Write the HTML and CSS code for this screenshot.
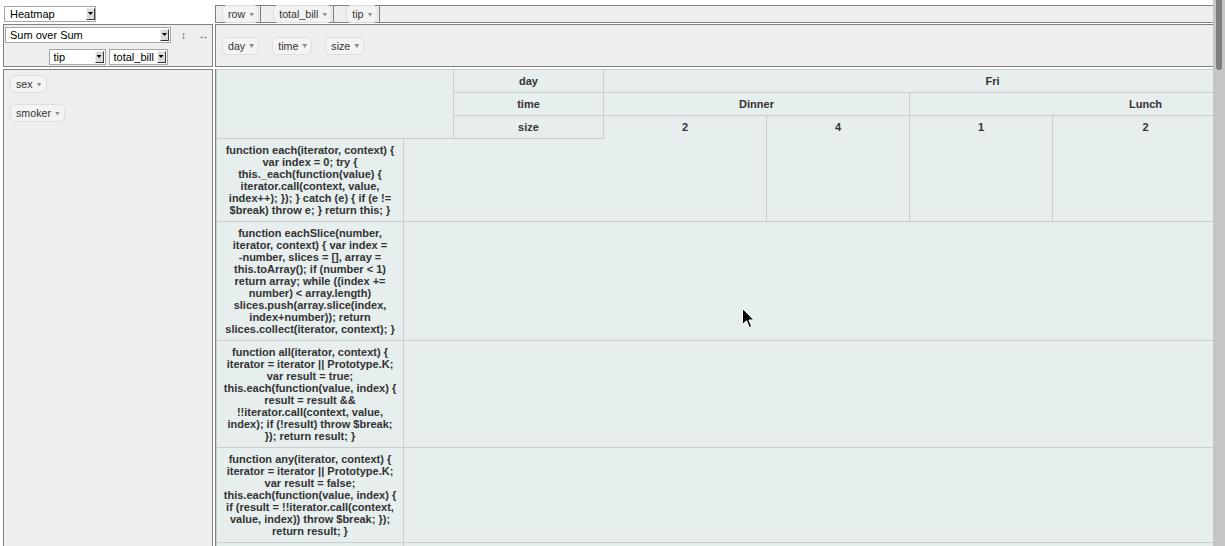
FILE: index.html
```html
<!DOCTYPE html>
<html>
<head>
<meta charset="utf-8">
<link rel="stylesheet" href="styles.css">
</head>
<body>
<div class="ui">
  <div class="renderer-cell">
    <div class="sel sel-renderer">Heatmap<i class="arr"></i></div>
  </div>
  <div class="axis unused">
    <div class="li"><span class="pill">row<i class="tri"></i></span><span class="sep"></span></div>
    <div class="li"><span class="pill">total_bill<i class="tri"></i></span><span class="sep"></span></div>
    <div class="li"><span class="pill">tip<i class="tri"></i></span><span class="sep"></span></div>
  </div>

  <div class="axis aggregator">
    <div class="agg-row">
      <div class="sel sel-agg">Sum over Sum<i class="arr"></i></div>
      <span class="order">↕</span><span class="order">↔</span>
    </div>
    <div class="agg-args">
      <div class="sel sel-tip">tip<i class="arr"></i></div>
      <div class="sel sel-tb">total_bill<i class="arr"></i></div>
    </div>
  </div>
  <div class="axis cols">
    <div class="li"><span class="pill">day<i class="tri"></i></span></div>
    <div class="li"><span class="pill">time<i class="tri"></i></span></div>
    <div class="li"><span class="pill">size<i class="tri"></i></span></div>
  </div>

  <div class="axis rows">
    <div class="vli"><span class="pill">sex<i class="tri"></i></span></div>
    <div class="vli"><span class="pill">smoker<i class="tri"></i></span></div>
  </div>
  <div class="render-area">
    <table class="pvt">
      <colgroup>
        <col class="c-a"><col class="c-b"><col class="c-c"><col class="c-d"><col class="c-e"><col class="c-f"><col class="c-g"><col class="c-h">
      </colgroup>
      <thead>
        <tr class="h1">
          <th colspan="2" rowspan="3"></th>
          <th class="axl">day</th>
          <th colspan="5">Fri</th>
        </tr>
        <tr>
          <th class="axl">time</th>
          <th colspan="2">Dinner</th>
          <th colspan="3">Lunch</th>
        </tr>
        <tr>
          <th class="axl">size</th>
          <th class="open">2</th>
          <th class="open">4</th>
          <th class="open">1</th>
          <th class="open">2</th>
          <th class="open">3</th>
        </tr>
      </thead>
      <tbody>
        <tr class="first-body">
          <th class="rl">function each(iterator, context) {<br>var index = 0; try {<br>this._each(function(value) {<br>iterator.call(context, value,<br>index++); }); } catch (e) { if (e !=<br>$break) throw e; } return this; }</th>
          <td colspan="3"></td>
          <td></td>
          <td></td>
          <td></td>
          <td></td>
        </tr>
        <tr>
          <th class="rl">function eachSlice(number,<br>iterator, context) { var index =<br>-number, slices = [], array =<br>this.toArray(); if (number &lt; 1)<br>return array; while ((index +=<br>number) &lt; array.length)<br>slices.push(array.slice(index,<br>index+number)); return<br>slices.collect(iterator, context); }</th>
          <td colspan="7"></td>
        </tr>
        <tr>
          <th class="rl">function all(iterator, context) {<br>iterator = iterator || Prototype.K;<br>var result = true;<br>this.each(function(value, index) {<br>result = result &amp;&amp;<br>!!iterator.call(context, value,<br>index); if (!result) throw $break;<br>}); return result; }</th>
          <td colspan="7"></td>
        </tr>
        <tr>
          <th class="rl">function any(iterator, context) {<br>iterator = iterator || Prototype.K;<br>var result = false;<br>this.each(function(value, index) {<br>if (result = !!iterator.call(context,<br>value, index)) throw $break; });<br>return result; }</th>
          <td colspan="7"></td>
        </tr>
        <tr>
          <th class="rl">function collect(iterator, context) {<br>iterator = iterator || Prototype.K;<br>var results = [];<br>this.each(function(value, index) {<br>results.push(iterator.call(context,<br>value, index)); }); return results; }</th>
          <td colspan="7"></td>
        </tr>
      </tbody>
    </table>
  </div>
</div>

<div class="scrollbar"><div class="thumb"></div></div>

<svg class="cursor" width="13" height="21" viewBox="0 0 13 21">
  <path d="M0.5 0.5 L0.5 16.5 L4.5 12.8 L7.3 19.5 L9.6 18.5 L6.9 12 L11.8 12 Z" fill="#000" stroke="#fff" stroke-width="1"/>
</svg>
</body>
</html>
```

FILE: styles.css
```css
* { box-sizing: border-box; }

html, body {
  margin: 0;
  padding: 0;
  height: 100%;
  overflow: hidden;
  background: #fff;
}

body {
  font-family: "Liberation Sans", Arial, sans-serif;
  color: #333;
}

.ui {
  display: grid;
  grid-template-columns: 210px 1500px;
  grid-template-rows: 18px 43px auto;
  column-gap: 2px;
  row-gap: 1px;
  padding: 5px 0 0 3px;
  width: max-content;
}

/* ---------- selects ---------- */
.renderer-cell {
  padding: 1px 0 0 1px;
}

.sel {
  position: relative;
  height: 16px;
  border: 1px solid #a6a6a6;
  background: #fff;
  color: #000;
  font-size: 11px;
  line-height: 14px;
  padding-left: 4px;
  white-space: nowrap;
}

.sel .arr {
  position: absolute;
  right: 1px;
  top: 1px;
  width: 9px;
  height: 12px;
  background: #dadada;
  border: 1px solid;
  border-color: #f2f2f2 #3a3a3a #3a3a3a #f2f2f2;
}

.sel .arr::after {
  content: "";
  position: absolute;
  left: 1px;
  top: 3px;
  width: 5px;
  height: 3px;
  background: #000;
  clip-path: polygon(0 0, 100% 0, 50% 100%);
}

.sel-renderer { width: 92px; padding-left: 5px; }
.sel-renderer .arr { right: 0; }
.sel-agg { width: 166px; }
.sel-tip { width: 57px; }
.sel-tb { width: 59px; }

/* ---------- axis containers ---------- */
.axis {
  border: 1px solid #808080;
  background: #eee;
}

.pill {
  display: inline-flex;
  align-items: center;
  height: 18px;
  padding: 0 4px 0 5px;
  border: 1px solid #dedede;
  border-radius: 5px;
  background: #f3f3f3;
  font-size: 10.67px;
  line-height: 12px;
  color: #333;
  white-space: nowrap;
}

.tri {
  display: inline-block;
  width: 5px;
  height: 4px;
  margin-left: 4px;
  margin-top: 1px;
  background: #8c8c8c;
  clip-path: polygon(0 0, 100% 0, 50% 100%);
}

.unused {
  display: flex;
  align-items: center;
  gap: 1px;
}

.unused .li {
  display: flex;
  align-items: center;
  align-self: stretch;
  gap: 1px;
  padding: 0 5px 0 6px;
}

.unused .sep {
  align-self: stretch;
  width: 1px;
  margin: -1px 0;
  background: #808080;
}

.aggregator {
  padding: 2px 0 0 1px;
}

.agg-row {
  display: flex;
  align-items: center;
}

.order {
  display: inline-block;
  width: 15px;
  margin-left: 5px;
  text-align: center;
  font-size: 10px;
  color: #555;
}

.agg-args {
  display: flex;
  justify-content: center;
  gap: 3px;
  margin-top: 6px;
  padding-right: 1px;
}

.cols {
  display: flex;
  align-items: center;
  gap: 1px;
}

.cols .li {
  display: flex;
  padding: 0 6px;
}

.rows {
  margin-top: 1px;
}

.vli {
  display: flex;
  padding: 5px 6px 6px;
}

/* ---------- renderer / table ---------- */
.render-area {
  margin-top: 1px;
  border-left: 1px solid #808080;
}

.pvt {
  border-collapse: collapse;
  table-layout: fixed;
  width: 1165px;
  font-size: 11px;
  line-height: 12px;
  font-weight: bold;
  color: #333;
}

.c-a { width: 187px; }
.c-b { width: 50px; }
.c-c { width: 150px; }
.c-d { width: 163px; }
.c-e { width: 143px; }
.c-f { width: 143px; }
.c-g { width: 186px; }
.c-h { width: 143px; }

.pvt th,
.pvt td {
  background: #e6eeee;
  border: 1px solid #cdcdcd;
  padding: 5px;
  text-align: center;
  vertical-align: top;
}

.pvt thead th {
  height: 23px;
}

.pvt thead .h1 th {
  height: 22px;
}

.pvt thead th.open {
  border-bottom: none;
}

.pvt .first-body td {
  border-top: none;
}

.pvt th.rl {
  white-space: nowrap;
  vertical-align: middle;
}

/* ---------- overlays ---------- */
.scrollbar {
  position: fixed;
  top: 0;
  right: 0;
  width: 12px;
  height: 100%;
  background: #c4c6c6;
}

.thumb {
  margin-left: 3px;
  width: 6px;
  height: 70px;
  background: #7b7f80;
  border-radius: 0 0 3px 3px;
}

.cursor {
  position: absolute;
  left: 742px;
  top: 308px;
}
```
